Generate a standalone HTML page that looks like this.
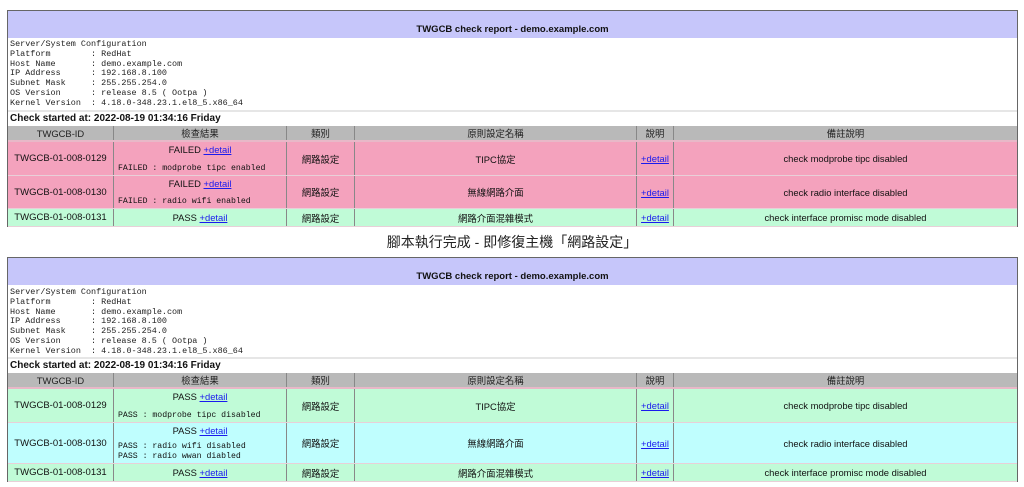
<!DOCTYPE html>
<html><head><meta charset="utf-8"><style>
*{margin:0;padding:0;box-sizing:border-box}
body{width:1024px;height:487px;background:#fff;position:relative;overflow:hidden;font-family:"Liberation Sans","Noto Sans CJK TC",sans-serif;color:#111}
.blk{position:absolute;left:7px;width:1011px;border:1px solid #666;border-bottom:none;background:#fff}
.band{position:absolute;left:0;right:0;background:#c6c6fa;font-weight:bold;font-size:9.5px;text-align:center}
.cfg{position:absolute;left:2px;font-family:"Liberation Mono",monospace;font-size:8.45px;line-height:9.8px;white-space:pre;color:#222}
.cs{position:absolute;left:0;right:0;font-weight:bold;font-size:10px;padding-left:2px;border-top:2px solid #e6e6e6;height:16px;line-height:14px}
.row{position:absolute;left:0;right:0;display:flex;font-size:9.4px;border-bottom:1px solid #e8d0d8}
.row>div{border-right:1px solid #888;display:flex;align-items:center;justify-content:center;text-align:center;position:relative}
.row>div:last-child{border-right:none}
.c1{width:106px}.c2{width:173px}.c3{width:68px}.c4{width:282px}.c5{width:37px}.c6{width:343px}
.h{background:#b9b9b9;color:#222;border-bottom:2px solid #e8b8c8}
.p{background:#f4a2bd}.g{background:#c0fbd7}.cy{background:#bffefe}
a{color:#1a1aee;text-decoration:underline}
.res{flex-direction:column;justify-content:flex-start!important}
.res .t{margin-top:2px}
.res .m{position:absolute;left:4px;bottom:2px;text-align:left;font-family:"Liberation Mono",monospace;font-size:8.2px;line-height:9.5px;white-space:pre}
.id{font-size:9.5px}
.cap{position:absolute;top:232px;left:0;width:1024px;text-align:center;font-size:14px;color:#222}
</style></head><body>

<div class="blk" style="top:10px;height:217px">
 <div class="band" style="top:0;height:27px;line-height:38px">TWGCB check report - demo.example.com</div>
 <div class="cfg" style="top:29px">Server/System Configuration
Platform        : RedHat
Host Name       : demo.example.com
IP Address      : 192.168.8.100
Subnet Mask     : 255.255.254.0
OS Version      : release 8.5 ( Ootpa )
Kernel Version  : 4.18.0-348.23.1.el8_5.x86_64</div>
 <div class="cs" style="top:99px">Check started at: 2022-08-19 01:34:16 Friday</div>
 <div class="row h" style="top:115px;height:16px"><div class="c1">TWGCB-ID</div><div class="c2">檢查結果</div><div class="c3">類別</div><div class="c4">原則設定名稱</div><div class="c5">說明</div><div class="c6">備註說明</div></div>
 <div class="row p" style="top:131px;height:34px"><div class="c1 id">TWGCB-01-008-0129</div><div class="c2 res"><span class="t">FAILED <a>+detail</a></span><span class="m">FAILED : modprobe tipc enabled</span></div><div class="c3">網路設定</div><div class="c4">TIPC協定</div><div class="c5"><a>+detail</a></div><div class="c6">check modprobe tipc disabled</div></div>
 <div class="row p" style="top:165px;height:33px"><div class="c1 id">TWGCB-01-008-0130</div><div class="c2 res"><span class="t">FAILED <a>+detail</a></span><span class="m">FAILED : radio wifi enabled</span></div><div class="c3">網路設定</div><div class="c4">無線網路介面</div><div class="c5"><a>+detail</a></div><div class="c6">check radio interface disabled</div></div>
 <div class="row g" style="top:198px;height:18px"><div class="c1 id">TWGCB-01-008-0131</div><div class="c2">PASS&nbsp;<a>+detail</a></div><div class="c3">網路設定</div><div class="c4">網路介面混雜模式</div><div class="c5"><a>+detail</a></div><div class="c6">check interface promisc mode disabled</div></div>
</div>

<div class="cap">腳本執行完成 - 即修復主機「網路設定」</div>

<div class="blk" style="top:257px;height:225px">
 <div class="band" style="top:0;height:27px;line-height:38px">TWGCB check report - demo.example.com</div>
 <div class="cfg" style="top:30px">Server/System Configuration
Platform        : RedHat
Host Name       : demo.example.com
IP Address      : 192.168.8.100
Subnet Mask     : 255.255.254.0
OS Version      : release 8.5 ( Ootpa )
Kernel Version  : 4.18.0-348.23.1.el8_5.x86_64</div>
 <div class="cs" style="top:99px">Check started at: 2022-08-19 01:34:16 Friday</div>
 <div class="row h" style="top:115px;height:16px"><div class="c1">TWGCB-ID</div><div class="c2">檢查結果</div><div class="c3">類別</div><div class="c4">原則設定名稱</div><div class="c5">說明</div><div class="c6">備註說明</div></div>
 <div class="row g" style="top:131px;height:34px"><div class="c1 id">TWGCB-01-008-0129</div><div class="c2 res"><span class="t">PASS <a>+detail</a></span><span class="m">PASS : modprobe tipc disabled</span></div><div class="c3">網路設定</div><div class="c4">TIPC協定</div><div class="c5"><a>+detail</a></div><div class="c6">check modprobe tipc disabled</div></div>
 <div class="row cy" style="top:165px;height:41px"><div class="c1 id">TWGCB-01-008-0130</div><div class="c2 res"><span class="t">PASS <a>+detail</a></span><span class="m">PASS : radio wifi disabled
PASS : radio wwan diabled</span></div><div class="c3">網路設定</div><div class="c4">無線網路介面</div><div class="c5"><a>+detail</a></div><div class="c6">check radio interface disabled</div></div>
 <div class="row g" style="top:206px;height:18px"><div class="c1 id">TWGCB-01-008-0131</div><div class="c2">PASS&nbsp;<a>+detail</a></div><div class="c3">網路設定</div><div class="c4">網路介面混雜模式</div><div class="c5"><a>+detail</a></div><div class="c6">check interface promisc mode disabled</div></div>
</div>
</body></html>
